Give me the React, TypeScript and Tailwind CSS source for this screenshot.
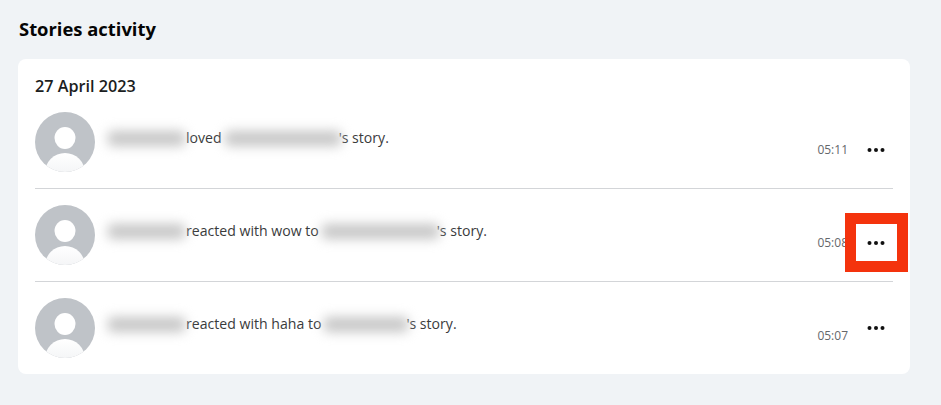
const ROWS = [
  { first: 77, verb: 'loved', second: 116, tail: "'s story.", time: '05:11', dotsTop: 'mt-[28px]', marked: false },
  { first: 77, verb: 'reacted with wow to', second: 117, tail: "'s story.", time: '05:08', dotsTop: 'mt-[28px]', marked: true },
  { first: 77, verb: 'reacted with haha to', second: 84, tail: "'s story.", time: '05:07', dotsTop: 'mt-[20px]', marked: false },
];

const Avatar = () => (
  <svg width="60" height="60" viewBox="0 0 60 60" className="shrink-0">
    <defs>
      <clipPath id="avatar-clip">
        <circle cx="30" cy="30" r="30" />
      </clipPath>
      <linearGradient id="avatar-body" x1="0" y1="0" x2="0" y2="1">
        <stop offset="0" stopColor="#ffffff" />
        <stop offset="1" stopColor="#e9ebee" />
      </linearGradient>
    </defs>
    <circle cx="30" cy="30" r="30" fill="#bfc3c8" />
    <ellipse cx="30" cy="26" rx="10.5" ry="11" fill="#ffffff" />
    <ellipse cx="30" cy="61" rx="20" ry="20" fill="url(#avatar-body)" clipPath="url(#avatar-clip)" />
  </svg>
);

const Dots = () => (
  <svg width="18" height="4" viewBox="0 0 18 4">
    <circle cx="2.5" cy="2" r="2" fill="#111" />
    <circle cx="9" cy="2" r="2" fill="#111" />
    <circle cx="15.5" cy="2" r="2" fill="#111" />
  </svg>
);

export default function App() {
  return (
    <div className="w-[941px] h-[405px] overflow-hidden bg-[#f0f3f6] text-[#1c1e21] font-['Open_Sans','Liberation_Sans',sans-serif]">
      <div className="pl-[18px] pr-[31px] pt-[17px]">
        <h1 className="text-[18.4px] leading-[24px] font-bold text-[#050505] pl-px">Stories activity</h1>
        <div className="mt-[18px] h-[315px] bg-white rounded-lg px-[17px] pt-[16px]">
          <h2 className="text-[16.2px] leading-[22px] font-semibold text-[#1c1e21]">27 April 2023</h2>
          <div className="mt-[15px]">
            {ROWS.map((row, i) => (
              <div key={row.time} className={i > 0 ? 'border-t border-[#d3d5d8] mt-[16px] pt-[16px]' : ''}>
                <div className="flex items-start h-[60px]">
                  <Avatar />
                  <div className="flex-1 flex items-center h-[20px] mt-[16px] ml-[13px] text-[14.1px] text-[#3a3b3c]">
                    <span className="inline-block h-[15px] bg-[#c6c6c6] rounded-sm blur-[6px]" style={{ width: row.first }} />
                    <span className="ml-[1px]">{row.verb}</span>
                    <span className="inline-block h-[15px] ml-[3px] mr-[-2px] bg-[#c6c6c6] rounded-sm blur-[6px]" style={{ width: row.second }} />
                    <span>{row.tail}</span>
                  </div>
                  <span className="mt-[30px] text-[12px] leading-[16px] text-[#65676b]">{row.time}</span>
                  <div className={`relative w-[42px] h-[20px] flex items-center justify-center ml-[7px] mr-[-4px] ${row.dotsTop}`}>
                    <Dots />
                    {row.marked && (
                      <div className="absolute left-[-10px] top-[-20px] w-[63px] h-[59px] border-[11px] border-[#f4330d]" />
                    )}
                  </div>
                </div>
              </div>
            ))}
          </div>
        </div>
      </div>
    </div>
  );
}
